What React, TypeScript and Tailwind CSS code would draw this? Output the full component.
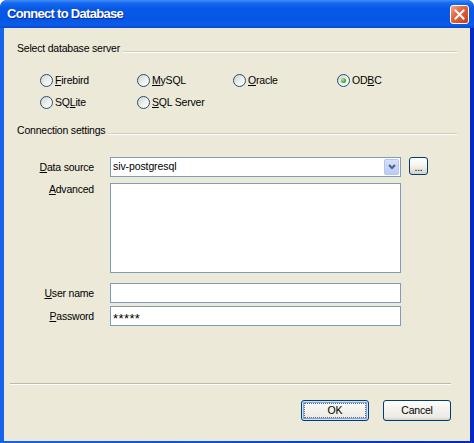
import type { ReactNode } from "react";

function Radio({ checked = false }: { checked?: boolean }) {
  return (
    <span className="flex h-[13px] w-[13px] shrink-0 items-center justify-center rounded-full border border-[#1C5180] bg-[linear-gradient(135deg,#D4D1C6_0%,#F1F0EA_55%,#FFFFFF_100%)]">
      {checked && (
        <span className="h-[5px] w-[5px] rounded-full bg-[radial-gradient(circle_at_35%_35%,#A8EAA8,#29A829_65%,#1A801A)]" />
      )}
    </span>
  );
}

function Option({ children, checked }: { children: ReactNode; checked?: boolean }) {
  return (
    <label className="flex items-center gap-[2px]">
      <Radio checked={checked} />
      <span className="leading-[13px]">{children}</span>
    </label>
  );
}

function GroupHeader({ title }: { title: string }) {
  return (
    <div className="flex h-[13px] items-end">
      <span className="leading-[13px]">{title}</span>
      <span className="mb-[2px] ml-[3px] h-[2px] flex-1 border-y border-t-[#D0CDBE] border-b-white" />
    </div>
  );
}

function Field({ children }: { children?: ReactNode }) {
  return (
    <div className="flex h-[20px] w-[291px] items-center border border-[#7F9DB9] bg-white pl-[2px]">
      {children}
    </div>
  );
}

function XpButton({ children, isDefault }: { children: ReactNode; isDefault?: boolean }) {
  return (
    <button
      className={
        isDefault
          ? "flex h-[21px] w-[68px] items-center justify-center rounded-[3px] border border-[#003C74] bg-[linear-gradient(180deg,#FFFFFF_0%,#F4F3EE_40%,#ECEBE6_85%,#D6D0C5_100%)] p-[2px] shadow-[inset_0_0_0_1px_#CEE7FF,inset_0_0_0_2px_#7EA2E8]"
          : "flex h-[21px] w-[68px] items-center justify-center rounded-[3px] border border-[#003C74] bg-[linear-gradient(180deg,#FFFFFF_0%,#F4F3EE_40%,#ECEBE6_85%,#D6D0C5_100%)] p-[2px]"
      }
    >
      <span
        className={
          isDefault
            ? "flex h-full w-full items-center justify-center border border-dotted border-[#6B6B6B]"
            : "flex h-full w-full items-center justify-center"
        }
      >
        {children}
      </span>
    </button>
  );
}

export default function App() {
  return (
    <div className="flex h-[443px] w-[474px] flex-col overflow-hidden rounded-t-[7px] bg-[linear-gradient(90deg,#1664EA,#0A4FDC_50%,#0428C0)] font-['Liberation_Sans',Arial,sans-serif] text-[10.5px] tracking-[-0.2px] text-black">
      {/* title bar */}
      <div className="flex h-[28px] shrink-0 items-center justify-between bg-[linear-gradient(180deg,#3E8EF8_0%,#1668F0_12%,#0659E7_30%,#0556E4_70%,#0A5CE9_88%,#0748D5_100%)] pl-[7px] pr-[5px]">
        <span className="text-[13px] font-bold tracking-[-0.7px] text-white [text-shadow:1px_1px_0_#0A2A9A]">
          Connect to Database
        </span>
        <div className="flex h-[19px] w-[19px] items-center justify-center rounded-[3px] border border-white bg-[linear-gradient(135deg,#F2A88C_0%,#E4673F_40%,#C33D18_100%)]">
          <svg width="11" height="11" viewBox="0 0 11 11">
            <path d="M1.5 1.5l8 8M9.5 1.5l-8 8" stroke="white" strokeWidth="2" strokeLinecap="square" />
          </svg>
        </div>
      </div>

      {/* client area */}
      <div className="mx-[4px] mb-[2px] flex flex-1 flex-col bg-[#ECE9D8] pt-[14px]">
        <div className="px-[13px]">
          <GroupHeader title="Select database server" />
        </div>

        <div className="mt-[17px] grid auto-rows-[16px] grid-cols-[97px_96px_104px_auto] gap-y-[6px] pl-[36px]">
          <Option>
            <u>F</u>irebird
          </Option>
          <Option>
            <u>M</u>ySQL
          </Option>
          <Option>
            <u>O</u>racle
          </Option>
          <Option checked>
            OD<u>B</u>C
          </Option>
          <Option>
            SQ<u>L</u>ite
          </Option>
          <Option>
            <u>S</u>QL Server
          </Option>
        </div>

        <div className="mt-[14px] px-[13px]">
          <GroupHeader title="Connection settings" />
        </div>

        <div className="mt-[20px] flex flex-col">
          <div className="flex items-start">
            <span className="w-[90px] text-right leading-[20px]">
              <u>D</u>ata source
            </span>
            <div className="ml-[16px] flex h-[20px] w-[291px] items-center border border-[#7F9DB9] bg-white pl-[2px]">
              <span className="flex-1 tracking-[-0.1px]">siv-postgresql</span>
              <span className="mr-px flex h-[16px] w-[15px] items-center justify-center rounded-[2px] border border-[#B3C5F0] bg-[linear-gradient(180deg,#D6E0FB,#B9CCF7)]">
                <svg width="8" height="6" viewBox="0 0 8 6">
                  <path d="M1 1l3 3 3-3" fill="none" stroke="#4D6185" strokeWidth="2" />
                </svg>
              </span>
            </div>
            <button className="ml-[8px] flex h-[18px] w-[19px] items-end justify-center rounded-[3px] border border-[#003C74] bg-[linear-gradient(180deg,#FFFFFF_0%,#F4F3EE_50%,#D6D0C5_100%)] pb-[3px] leading-[8px]">
              ...
            </button>
          </div>

          <div className="mt-[6px] flex items-start">
            <span className="w-[90px] text-right leading-[13px]">
              <u>A</u>dvanced
            </span>
            <div className="ml-[16px] h-[90px] w-[291px] border border-[#7F9DB9] bg-white" />
          </div>

          <div className="mt-[10px] flex items-center">
            <span className="w-[90px] pt-px text-right">
              <u>U</u>ser name
            </span>
            <div className="ml-[16px]">
              <Field />
            </div>
          </div>

          <div className="mt-[3px] flex items-center">
            <span className="w-[90px] pt-px text-right">
              <u>P</u>assword
            </span>
            <div className="ml-[16px]">
              <Field>
                <span className="pt-[4px] text-[13px] leading-[13px] tracking-[0.4px]">*****</span>
              </Field>
            </div>
          </div>
        </div>

        <div className="ml-[6px] mr-[19px] mt-[57px] h-[2px] border-y border-t-[#BDBAAA] border-b-white" />

        <div className="mt-[15px] flex justify-end gap-[14px] pr-[19px]">
          <XpButton isDefault>OK</XpButton>
          <XpButton>Cancel</XpButton>
        </div>
      </div>
    </div>
  );
}
